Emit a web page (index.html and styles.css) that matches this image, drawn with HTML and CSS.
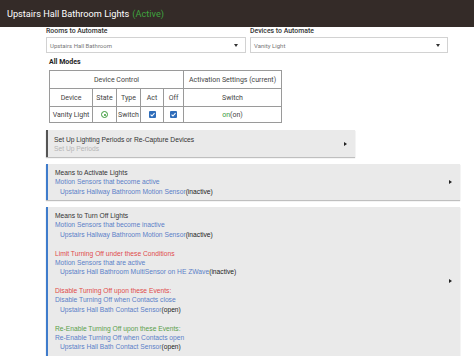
FILE: index.html
```html
<!DOCTYPE html>
<html>
  <head>
    <title>Upstairs Hall Bathroom Lights</title>
    <link rel="stylesheet" href="styles.css">
  </head>
  <body>
    <header class="topbar">
      <span class="title">Upstairs Hall Bathroom Lights</span>
      <span class="status">(Active)</span>
    </header>

    <main class="page">
      <div class="pickers">
        <div class="picker">
          <div class="picker-label">Rooms to Automate</div>
          <div class="select"><span>Upstairs Hall Bathroom</span><span class="caret"></span></div>
        </div>
        <div class="picker">
          <div class="picker-label">Devices to Automate</div>
          <div class="select"><span>Vanity Light</span><span class="caret"></span></div>
        </div>
      </div>

      <div class="modes-title">All Modes</div>
      <table class="modes">
        <colgroup>
          <col class="c-device">
          <col class="c-state">
          <col class="c-type">
          <col class="c-act">
          <col class="c-off">
          <col class="c-switch">
        </colgroup>
        <tr class="row-head">
          <td colspan="5">Device Control</td>
          <td class="split">Activation Settings (current)</td>
        </tr>
        <tr class="row-head">
          <td>Device</td>
          <td>State</td>
          <td>Type</td>
          <td>Act</td>
          <td>Off</td>
          <td class="split">Switch</td>
        </tr>
        <tr class="row-data">
          <td>Vanity Light</td>
          <td><span class="radio"></span></td>
          <td>Switch</td>
          <td><span class="check"><svg viewBox="0 0 8 8"><path d="M1.8 4.2 L3.4 5.7 L6.3 2.4" /></svg></span></td>
          <td><span class="check"><svg viewBox="0 0 8 8"><path d="M1.8 4.2 L3.4 5.7 L6.3 2.4" /></svg></span></td>
          <td class="split"><span class="on">on</span>(on)</td>
        </tr>
      </table>

      <div class="section narrow">
        <div class="section-text">
          <div class="line">Set Up Lighting Periods or Re-Capture Devices</div>
          <div class="line muted">Set Up Periods</div>
        </div>
        <span class="arrow"></span>
      </div>

      <div class="section blue">
        <div class="section-text">
          <div class="line">Means to Activate Lights</div>
          <div class="line link">Motion Sensors that become active</div>
          <div class="line link indent">Upstairs Hallway Bathroom Motion Sensor<span class="val">(inactive)</span></div>
        </div>
        <span class="arrow"></span>
      </div>

      <div class="section blue">
        <div class="section-text">
          <div class="line">Means to Turn Off Lights</div>
          <div class="line link">Motion Sensors that become inactive</div>
          <div class="line link indent">Upstairs Hallway Bathroom Motion Sensor<span class="val">(inactive)</span></div>
          <div class="line"></div>
          <div class="line red">Limit Turning Off under these Conditions</div>
          <div class="line link">Motion Sensors that are active</div>
          <div class="line link indent">Upstairs Hall Bathroom MultiSensor on HE ZWave<span class="val">(inactive)</span></div>
          <div class="line"></div>
          <div class="line red">Disable Turning Off upon these Events:</div>
          <div class="line link">Disable Turning Off when Contacts close</div>
          <div class="line link indent">Upstairs Hall Bath Contact Sensor<span class="val">(open)</span></div>
          <div class="line"></div>
          <div class="line green">Re-Enable Turning Off upon these Events:</div>
          <div class="line link">Re-Enable Turning Off when Contacts open</div>
          <div class="line link indent">Upstairs Hall Bath Contact Sensor<span class="val">(open)</span></div>
        </div>
        <span class="arrow"></span>
      </div>
    </main>
  </body>
</html>
```

FILE: styles.css
```css
body {
  margin: 0;
  background-color: #ffffff;
  font-family: Roboto, "Liberation Sans", Arial, sans-serif;
  color: #333333;
}
.topbar {
  height: 27px;
  display: flex;
  align-items: center;
  padding-left: 7px;
  background-color: #342b28;
  font-size: 9.2px;
}
.title {
  color: #ffffff;
}
.status {
  color: #3fa33f;
  margin-left: 3px;
}
.page {
  padding: 0 14px 0 46px;
}
.pickers {
  display: grid;
  grid-template-columns: 200px 198px;
  column-gap: 4px;
}
.picker-label {
  font-size: 6.9px;
  font-weight: 500;
  line-height: 9px;
  color: #333333;
  margin-bottom: 1px;
}
.select {
  height: 16px;
  box-sizing: border-box;
  border: 1px solid #d2d2d2;
  display: flex;
  align-items: center;
  justify-content: space-between;
  padding: 0 7px 0 3px;
  font-size: 6px;
  color: #777777;
}
.caret {
  width: 0;
  height: 0;
  border-top: 3px solid #333333;
  border-left: 2px solid transparent;
  border-right: 2px solid transparent;
}
.modes-title {
  font-size: 7px;
  font-weight: 700;
  line-height: 9px;
  margin: 5px 0 0 3px;
  color: #222222;
}
.modes {
  margin: 3px 0 0 3px;
  border-collapse: collapse;
  border: 1.5px solid #333333;
  font-size: 7px;
  color: #444444;
}
.modes td {
  border: 1px solid #9a9a9a;
  text-align: center;
  padding: 0;
}
.modes td.split {
  border-left: 1.5px solid #333333;
}
.c-device { width: 43px; }
.c-state { width: 24px; }
.c-type { width: 24px; }
.c-act { width: 23px; }
.c-off { width: 20px; }
.c-switch { width: 98px; }
.row-head td {
  height: 17px;
}
.row-data td {
  height: 15px;
}
.radio {
  display: inline-block;
  width: 5px;
  height: 5px;
  border: 1px solid #3a9a3a;
  border-radius: 50%;
  position: relative;
  vertical-align: middle;
}
.radio::after {
  content: "";
  position: absolute;
  left: 1.5px;
  top: 1.5px;
  width: 2px;
  height: 2px;
  border-radius: 50%;
  background-color: #3a9a3a;
}
.check {
  display: inline-block;
  width: 7px;
  height: 7px;
  background-color: #2f6dba;
  border-radius: 1px;
  vertical-align: middle;
}
.check svg {
  display: block;
  width: 7px;
  height: 7px;
}
.check path {
  fill: none;
  stroke: #ffffff;
  stroke-width: 1.2;
}
.on {
  color: #3a9a3a;
}
.section {
  box-sizing: border-box;
  width: 414px;
  display: flex;
  align-items: center;
  justify-content: space-between;
  background-color: #eaeaea;
  border-left: 2px solid #3f7ccc;
  box-shadow: 0 1px 1px rgba(0, 0, 0, 0.25);
  padding: 4px 8px 4px 7px;
  margin-top: 7px;
  font-family: "Liberation Sans", Arial, sans-serif;
  font-size: 6.7px;
}
.section.narrow {
  width: 309px;
  margin-top: 7px;
  padding: 5px 8px 3px 6px;
  border-left-color: #555555;
}
.section .line {
  line-height: 9.4px;
  height: 9.4px;
  white-space: nowrap;
  color: #333333;
}
.section .line.muted {
  color: #b5b5b5;
}
.section .line.link {
  color: #5b80c8;
}
.section .line.red {
  color: #e04b4b;
}
.section .line.green {
  color: #5aa04a;
}
.section .line.indent {
  padding-left: 5px;
}
.val {
  color: #222222;
}
.arrow {
  width: 0;
  height: 0;
  border-left: 3px solid #222222;
  border-top: 2px solid transparent;
  border-bottom: 2px solid transparent;
}
```
